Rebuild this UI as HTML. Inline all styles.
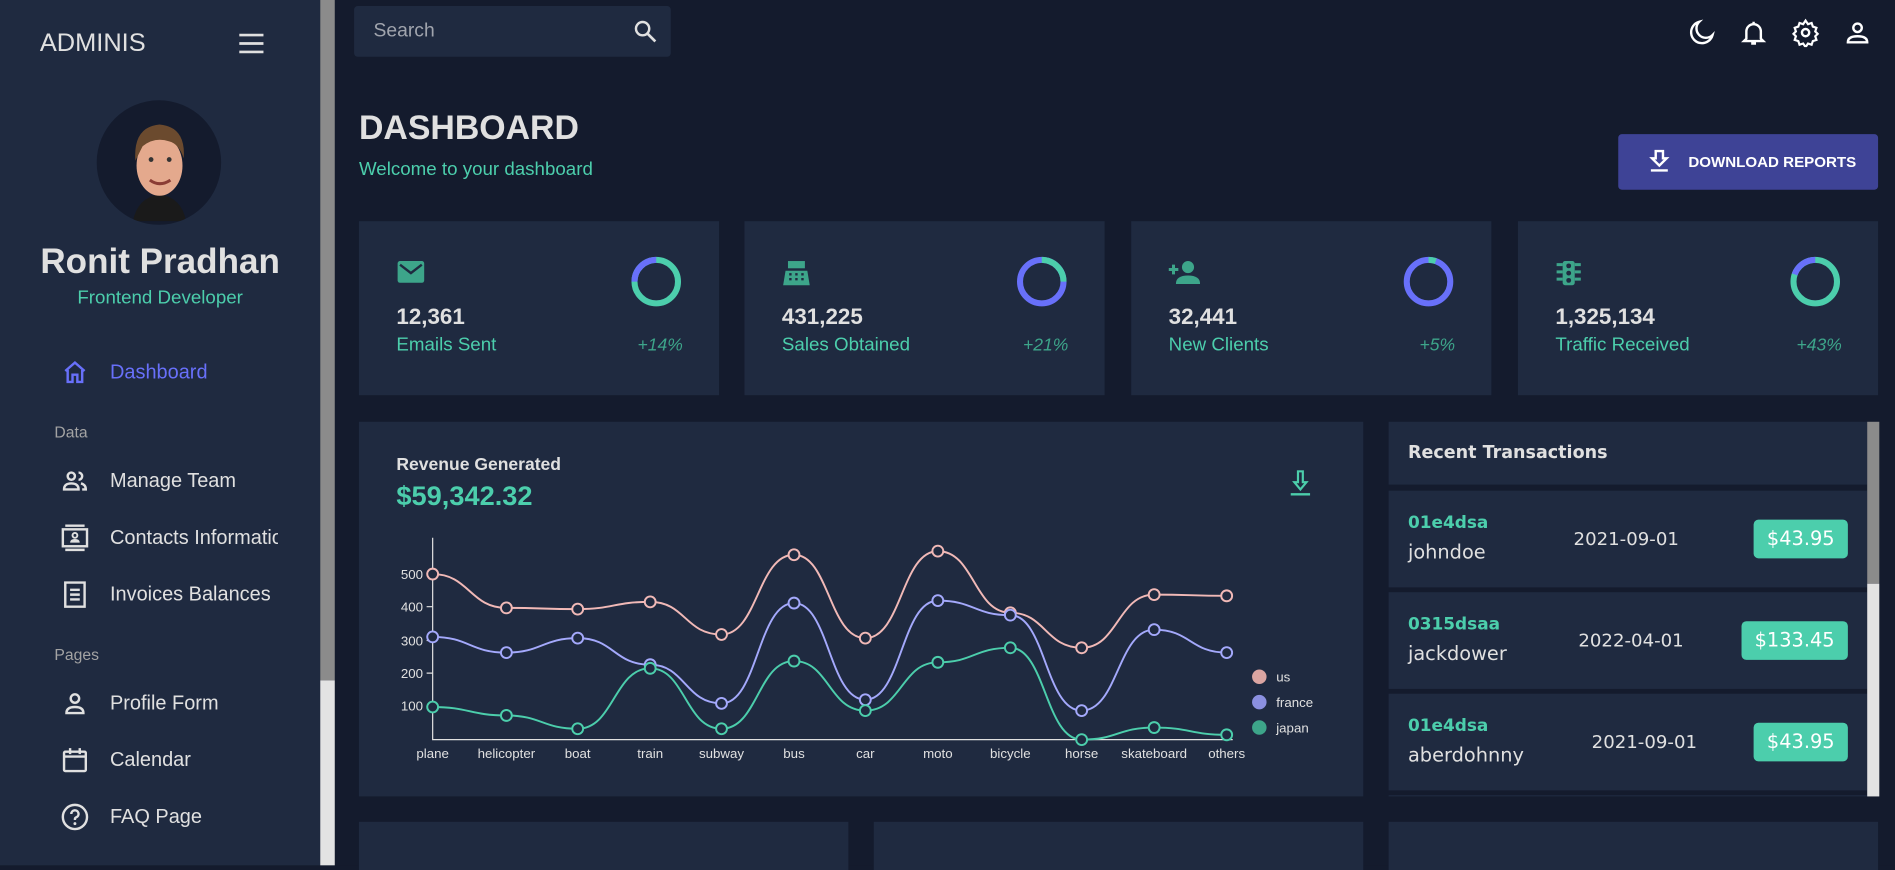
<!DOCTYPE html>
<html><head><meta charset="utf-8"><style>
*{margin:0;padding:0;box-sizing:border-box}
html,body{width:1895px;height:865px;overflow:hidden;background:#141b2d}
#w{position:absolute;left:0;top:0;width:1568px;height:716px;transform:scale(1.20855);transform-origin:0 0;font-family:"Liberation Sans",sans-serif;color:#e0e0e0;background:#141b2d}
.a{position:absolute}
.card{position:absolute;background:#1f2a40}
.nav{position:absolute;left:50px;font-size:16.5px;color:#e0e0e0;display:flex;align-items:center}
.nav svg{width:24px;height:24px;margin-right:17px}
.lab{position:absolute;left:45px;font-size:13px;color:#a3a3a3}
.stat .ic{position:absolute;left:31px;top:32px}
.stat .n{position:absolute;left:31px;top:68px;font-size:18.5px;font-weight:bold;color:#e0e0e0}
.stat .l{position:absolute;left:31px;top:94px;font-size:15.5px;color:#4cceac}
.stat .p{position:absolute;right:30px;top:95px;font-size:14.5px;font-style:italic;color:#3da58a}
.stat svg.r{position:absolute;left:225px;top:29px}
.tr{position:absolute;left:1149px;width:396px;height:80px;background:#1f2a40;font-family:"DejaVu Sans",sans-serif}
.tr .id{position:absolute;left:16px;top:19px;font-size:14px;font-weight:bold;color:#4cceac}
.tr .nm{position:absolute;left:16px;top:41px;font-size:16px;color:#e0e0e0}
.tr .d{position:absolute;top:31px;font-size:15px;color:#e0e0e0}
.tr .b{position:absolute;right:16px;top:24px;height:32px;line-height:32px;padding:0 11px;background:#4cceac;border-radius:4px;font-size:16px;color:#fff}
</style></head><body><div id="w">
<div class="a" style="left:0;top:0;width:265px;height:716px;background:#1f2a40"></div>
<div class="a" style="left:265px;top:0;width:12px;height:563px;background:#8b8b8b"></div>
<div class="a" style="left:265px;top:563px;width:12px;height:153px;background:#e3e3e3"></div>
<div class="a" style="left:33px;top:24px;font-size:21px;color:#e0e0e0">ADMINIS</div>
<svg class="a" style="left:197px;top:27px" width="22" height="18"><path d="M1 2h20M1 9h20M1 16h20" stroke="#e0e0e0" stroke-width="2.2"/></svg>
<div class="a" style="left:80px;top:83px;width:103px;height:103px;border-radius:50%;background:#141b2d;overflow:hidden">
<svg width="103" height="103"><path d="M30 100 Q34 80 52 78 Q70 80 74 100Z" fill="#1a1a1a"/><ellipse cx="52" cy="54" rx="19" ry="25" fill="#e4a98d"/><path d="M32 50 Q30 22 52 20 Q74 22 72 48 Q68 36 60 34 Q48 30 38 38Z" fill="#6b4a2e"/><path d="M44 66 Q52 72 61 66" stroke="#8a3d35" stroke-width="2.5" fill="none"/><circle cx="45" cy="49" r="2" fill="#333"/><circle cx="60" cy="49" r="2" fill="#333"/></svg></div>
<div class="a" style="left:0;width:265px;top:201px;text-align:center;font-size:29px;font-weight:bold;color:#e0e0e0">Ronit Pradhan</div>
<div class="a" style="left:0;width:265px;top:238px;text-align:center;font-size:15.5px;color:#4cceac">Frontend Developer</div>
<div class="nav" style="top:296px;color:#6870fa"><svg viewBox="0 0 24 24"><path d="M4 11 12 4l8 7M6 10v10h4v-6h4v6h4V10" fill="none" stroke="#6870fa" stroke-width="2"/></svg>Dashboard</div>
<div class="lab" style="top:350px">Data</div>
<div class="nav" style="top:386px"><svg viewBox="0 0 24 24"><circle cx="9" cy="8" r="3" fill="none" stroke="#e0e0e0" stroke-width="2"/><path d="M3 19q0-5 6-5t6 5zM15 5a3 3 0 0 1 0 6M17 14q4 1 4 5h-3" fill="none" stroke="#e0e0e0" stroke-width="2"/></svg>Manage Team</div>
<div class="nav" style="top:433px;width:180px;overflow:hidden;white-space:nowrap"><svg viewBox="0 0 24 24" style="flex:none"><rect x="2" y="5" width="20" height="14" fill="none" stroke="#e0e0e0" stroke-width="2"/><path d="M4 2h16M4 22h16" stroke="#e0e0e0" stroke-width="2"/><circle cx="12" cy="10" r="2" fill="none" stroke="#e0e0e0" stroke-width="1.6"/><path d="M8 16q0-3 4-3t4 3z" fill="#e0e0e0"/></svg>Contacts Information</div>
<div class="nav" style="top:480px"><svg viewBox="0 0 24 24"><path d="M4 2h16v20H4z" fill="none" stroke="#e0e0e0" stroke-width="2"/><path d="M8 8h8M8 12h8M8 16h8" stroke="#e0e0e0" stroke-width="2"/></svg>Invoices Balances</div>
<div class="lab" style="top:534px">Pages</div>
<div class="nav" style="top:570px"><svg viewBox="0 0 24 24"><circle cx="12" cy="8" r="3.5" fill="none" stroke="#e0e0e0" stroke-width="2"/><path d="M5 20q0-5 7-5t7 5z" fill="none" stroke="#e0e0e0" stroke-width="2"/></svg>Profile Form</div>
<div class="nav" style="top:617px"><svg viewBox="0 0 24 24"><rect x="3" y="5" width="18" height="16" rx="1" fill="none" stroke="#e0e0e0" stroke-width="2"/><path d="M3 9h18M8 2v5M16 2v5" stroke="#e0e0e0" stroke-width="2"/></svg>Calendar</div>
<div class="nav" style="top:664px"><svg viewBox="0 0 24 24"><circle cx="12" cy="12" r="10" fill="none" stroke="#e0e0e0" stroke-width="2"/><path d="M9 9.5a3 3 0 1 1 4 2.8c-1 .5-1 1-1 2.2" fill="none" stroke="#e0e0e0" stroke-width="2"/><circle cx="12" cy="17.5" r="1.2" fill="#e0e0e0"/></svg>FAQ Page</div>
<div class="card" style="left:293px;top:5px;width:262px;height:42px;border-radius:3px"><div class="a" style="left:16px;top:12px;font-size:16px;color:#a0a4ad">Search</div>
<svg class="a" style="left:230px;top:10px" width="22" height="22" viewBox="0 0 24 24"><circle cx="9.5" cy="9.5" r="6" fill="none" stroke="#e0e0e0" stroke-width="2.2"/><path d="M14 14l7 7" stroke="#e0e0e0" stroke-width="2.4"/></svg></div>
<svg class="a" style="left:1396px;top:15px" width="24" height="24" viewBox="0 0 24 24"><path d="M10 3a9 9 0 1 0 11 11 7 7 0 0 1-11-11z" fill="none" stroke="#fff" stroke-width="2"/></svg>
<svg class="a" style="left:1439px;top:15px" width="24" height="24" viewBox="0 0 24 24"><path d="M6 17V11a6 6 0 0 1 12 0v6l2 2H4zM10 21h4M12 3v2" fill="none" stroke="#fff" stroke-width="2"/></svg>
<svg class="a" style="left:1482px;top:15px" width="24" height="24" viewBox="0 0 24 24"><circle cx="12" cy="12" r="3" fill="none" stroke="#fff" stroke-width="2"/><path d="M12 2l2 3 3-1 1 3 3 1-1 3 2 2-2 2 1 3-3 1-1 3-3-1-2 3-2-3-3 1-1-3-3-1 1-3-2-2 2-2-1-3 3-1 1-3 3 1z" fill="none" stroke="#fff" stroke-width="1.8"/></svg>
<svg class="a" style="left:1525px;top:15px" width="24" height="24" viewBox="0 0 24 24"><circle cx="12" cy="8" r="3.5" fill="none" stroke="#fff" stroke-width="2"/><path d="M4 20q0-5 8-5t8 5z" fill="none" stroke="#fff" stroke-width="2"/></svg>
<div class="a" style="left:297px;top:90px;font-size:28px;font-weight:bold;color:#e0e0e0">DASHBOARD</div>
<div class="a" style="left:297px;top:132px;font-size:15.5px;color:#4cceac">Welcome to your dashboard</div>
<div class="a" style="left:1339px;top:111px;width:215px;height:46px;background:#3e4396;border-radius:3px;color:#e0e0e0;font-size:12.5px;font-weight:bold">
<svg class="a" style="left:24px;top:12px" width="20" height="20" viewBox="0 0 20 20"><path d="M7 2h6v6h3l-6 6-6-6h3z" fill="none" stroke="#fff" stroke-width="2"/><path d="M3 18h14" stroke="#fff" stroke-width="2"/></svg>
<div class="a" style="left:58px;top:16px;color:#fff">DOWNLOAD REPORTS</div></div>
<div class="card stat" style="left:297px;top:183px;width:298px;height:144px">
<svg class="ic" width="24" height="20" viewBox="0 0 24 20"><rect x="1" y="1" width="22" height="18" rx="2" fill="#3da58a"/><path d="M3 4l9 7 9-7" fill="none" stroke="#1f2a40" stroke-width="2"/></svg>
<svg class="r" width="42" height="42"><circle cx="21" cy="21" r="18" fill="none" stroke="#4cceac" stroke-width="5"/><path d="M3 21A18 18 0 0 1 21 3" fill="none" stroke="#6870fa" stroke-width="5"/></svg>
<div class="n">12,361</div><div class="l">Emails Sent</div><div class="p">+14%</div></div>
<div class="card stat" style="left:616px;top:183px;width:298px;height:144px">
<svg class="ic" width="24" height="22" viewBox="0 0 24 22"><rect x="5" y="1" width="14" height="6" fill="#3da58a"/><path d="M3 9h18l2 12H1z" fill="#3da58a"/><path d="M6 12h2M11 12h2M16 12h2M6 16h2M11 16h2M16 16h2" stroke="#1f2a40" stroke-width="2"/></svg>
<svg class="r" width="42" height="42"><circle cx="21" cy="21" r="18" fill="none" stroke="#6870fa" stroke-width="5"/><path d="M21 3A18 18 0 0 1 39 21" fill="none" stroke="#4cceac" stroke-width="5"/></svg>
<div class="n">431,225</div><div class="l">Sales Obtained</div><div class="p">+21%</div></div>
<div class="card stat" style="left:936px;top:183px;width:298px;height:144px">
<svg class="ic" width="26" height="20" viewBox="0 0 26 20"><circle cx="16" cy="6" r="5" fill="#3da58a"/><path d="M6 20q0-7 10-7t10 7z" fill="#3da58a"/><path d="M0 8h8M4 4v8" stroke="#3da58a" stroke-width="2.5"/></svg>
<svg class="r" width="42" height="42"><circle cx="21" cy="21" r="18" fill="none" stroke="#6870fa" stroke-width="5"/><path d="M21 3A18 18 0 0 1 27 4" fill="none" stroke="#4cceac" stroke-width="5"/></svg>
<div class="n">32,441</div><div class="l">New Clients</div><div class="p">+5%</div></div>
<div class="card stat" style="left:1256px;top:183px;width:298px;height:144px">
<svg class="ic" width="22" height="22" viewBox="0 0 22 22"><rect x="6" y="1" width="10" height="20" rx="2" fill="#3da58a"/><path d="M1 4h5M16 4h5M1 10h5M16 10h5M1 16h5M16 16h5" stroke="#3da58a" stroke-width="2.5"/><circle cx="11" cy="5" r="2" fill="#1f2a40"/><circle cx="11" cy="11" r="2" fill="#1f2a40"/><circle cx="11" cy="17" r="2" fill="#1f2a40"/></svg>
<svg class="r" width="42" height="42"><circle cx="21" cy="21" r="18" fill="none" stroke="#4cceac" stroke-width="5"/><path d="M4 15A18 18 0 0 1 21 3" fill="none" stroke="#6870fa" stroke-width="5"/></svg>
<div class="n">1,325,134</div><div class="l">Traffic Received</div><div class="p">+43%</div></div>
<div class="card" style="left:297px;top:349px;width:831px;height:310px"></div>
<div class="a" style="left:328px;top:377px;font-size:14.5px;font-weight:bold;color:#e0e0e0">Revenue Generated</div>
<div class="a" style="left:328px;top:398px;font-size:22.5px;font-weight:bold;color:#4cceac">$59,342.32</div>
<svg class="a" style="left:1066px;top:389px" width="20" height="22" viewBox="0 0 20 22"><path d="M8 1h4v9h3l-5 6-5-6h3z" fill="none" stroke="#4cceac" stroke-width="1.8"/><path d="M2 20h16" stroke="#4cceac" stroke-width="2"/></svg>
<svg class="a" style="left:0;top:0" width="1568" height="716" font-family="Liberation Sans, sans-serif" font-size="11" fill="#e0e0e0">
<path d="M358 445V612H1020" fill="none" stroke="#e0e0e0" stroke-width="1"/>
<g text-anchor="end"><text x="350" y="479">500</text><text x="350" y="506">400</text><text x="350" y="534">300</text><text x="350" y="561">200</text><text x="350" y="588">100</text></g>
<path d="M353 475h5M353 502h5M353 530h5M353 557h5M353 584h5" stroke="#e0e0e0"/>
<g text-anchor="middle"><text x="358" y="627">plane</text><text x="419" y="627">helicopter</text><text x="478" y="627">boat</text><text x="538" y="627">train</text><text x="597" y="627">subway</text><text x="657" y="627">bus</text><text x="716" y="627">car</text><text x="776" y="627">moto</text><text x="836" y="627">bicycle</text><text x="895" y="627">horse</text><text x="955" y="627">skateboard</text><text x="1015" y="627">others</text></g>
<g fill="none" stroke-width="1.6">
<path stroke="#f1b9b7" d="M358,475 C388,475 389,503 419,503 C448,503 449,504 478,504 C508,504 508,498 538,498 C567,498 567,525 597,525 C627,525 627,459 657,459 C686,459 686,528 716,528 C746,528 746,456 776,456 C806,456 806,507 836,507 C865,507 865,536 895,536 C925,536 925,492 955,492 C985,492 985,493 1015,493"/>
<path stroke="#a4a9fc" d="M358,527 C388,527 389,540 419,540 C448,540 449,528 478,528 C508,528 508,550 538,550 C567,550 567,582 597,582 C627,582 627,499 657,499 C686,499 686,579 716,579 C746,579 746,497 776,497 C806,497 806,509 836,509 C865,509 865,588 895,588 C925,588 925,521 955,521 C985,521 985,540 1015,540"/>
<path stroke="#4cceac" d="M358,585 C388,585 389,592 419,592 C448,592 449,603 478,603 C508,603 508,553 538,553 C567,553 567,603 597,603 C627,603 627,547 657,547 C686,547 686,588 716,588 C746,588 746,548 776,548 C806,548 806,536 836,536 C865,536 865,612 895,612 C925,612 925,602 955,602 C985,602 985,608 1015,608"/>
</g>
<g fill="#1f2a40" stroke-width="1.6">
<g stroke="#f1b9b7"><circle cx="358" cy="475" r="4.5"/><circle cx="419" cy="503" r="4.5"/><circle cx="478" cy="504" r="4.5"/><circle cx="538" cy="498" r="4.5"/><circle cx="597" cy="525" r="4.5"/><circle cx="657" cy="459" r="4.5"/><circle cx="716" cy="528" r="4.5"/><circle cx="776" cy="456" r="4.5"/><circle cx="836" cy="507" r="4.5"/><circle cx="895" cy="536" r="4.5"/><circle cx="955" cy="492" r="4.5"/><circle cx="1015" cy="493" r="4.5"/></g>
<g stroke="#a4a9fc"><circle cx="358" cy="527" r="4.5"/><circle cx="419" cy="540" r="4.5"/><circle cx="478" cy="528" r="4.5"/><circle cx="538" cy="550" r="4.5"/><circle cx="597" cy="582" r="4.5"/><circle cx="657" cy="499" r="4.5"/><circle cx="716" cy="579" r="4.5"/><circle cx="776" cy="497" r="4.5"/><circle cx="836" cy="509" r="4.5"/><circle cx="895" cy="588" r="4.5"/><circle cx="955" cy="521" r="4.5"/><circle cx="1015" cy="540" r="4.5"/></g>
<g stroke="#4cceac"><circle cx="358" cy="585" r="4.5"/><circle cx="419" cy="592" r="4.5"/><circle cx="478" cy="603" r="4.5"/><circle cx="538" cy="553" r="4.5"/><circle cx="597" cy="603" r="4.5"/><circle cx="657" cy="547" r="4.5"/><circle cx="716" cy="588" r="4.5"/><circle cx="776" cy="548" r="4.5"/><circle cx="836" cy="536" r="4.5"/><circle cx="895" cy="612" r="4.5"/><circle cx="955" cy="602" r="4.5"/><circle cx="1015" cy="608" r="4.5"/></g>
</g>
<circle cx="1042" cy="560" r="6" fill="#dba5a2"/><circle cx="1042" cy="581" r="6" fill="#8b90e0"/><circle cx="1042" cy="602" r="6" fill="#3da58a"/>
<text x="1056" y="564">us</text><text x="1056" y="585">france</text><text x="1056" y="606">japan</text>
</svg>
<div class="a" style="left:1149px;top:349px;width:396px;height:52px;background:#1f2a40;font-family:'DejaVu Sans',sans-serif"><div class="a" style="left:16px;top:18px;font-size:14.5px;font-weight:bold;color:#e0e0e0">Recent Transactions</div></div>
<div class="tr" style="top:406px"><div class="id">01e4dsa</div><div class="nm">johndoe</div><div class="d" style="left:153px">2021-09-01</div><div class="b">$43.95</div></div>
<div class="tr" style="top:490px"><div class="id">0315dsaa</div><div class="nm">jackdower</div><div class="d" style="left:157px">2022-04-01</div><div class="b">$133.45</div></div>
<div class="tr" style="top:574px"><div class="id">01e4dsa</div><div class="nm">aberdohnny</div><div class="d" style="left:168px">2021-09-01</div><div class="b">$43.95</div></div>
<div class="tr" style="top:658px;height:1px"></div>
<div class="a" style="left:1545px;top:349px;width:10px;height:134px;background:#8b8b8b"></div>
<div class="a" style="left:1545px;top:483px;width:10px;height:176px;background:#e3e3e3"></div>
<div class="card" style="left:297px;top:680px;width:405px;height:40px"></div>
<div class="card" style="left:723px;top:680px;width:405px;height:40px"></div>
<div class="card" style="left:1149px;top:680px;width:405px;height:40px"></div>
</div></body></html>
